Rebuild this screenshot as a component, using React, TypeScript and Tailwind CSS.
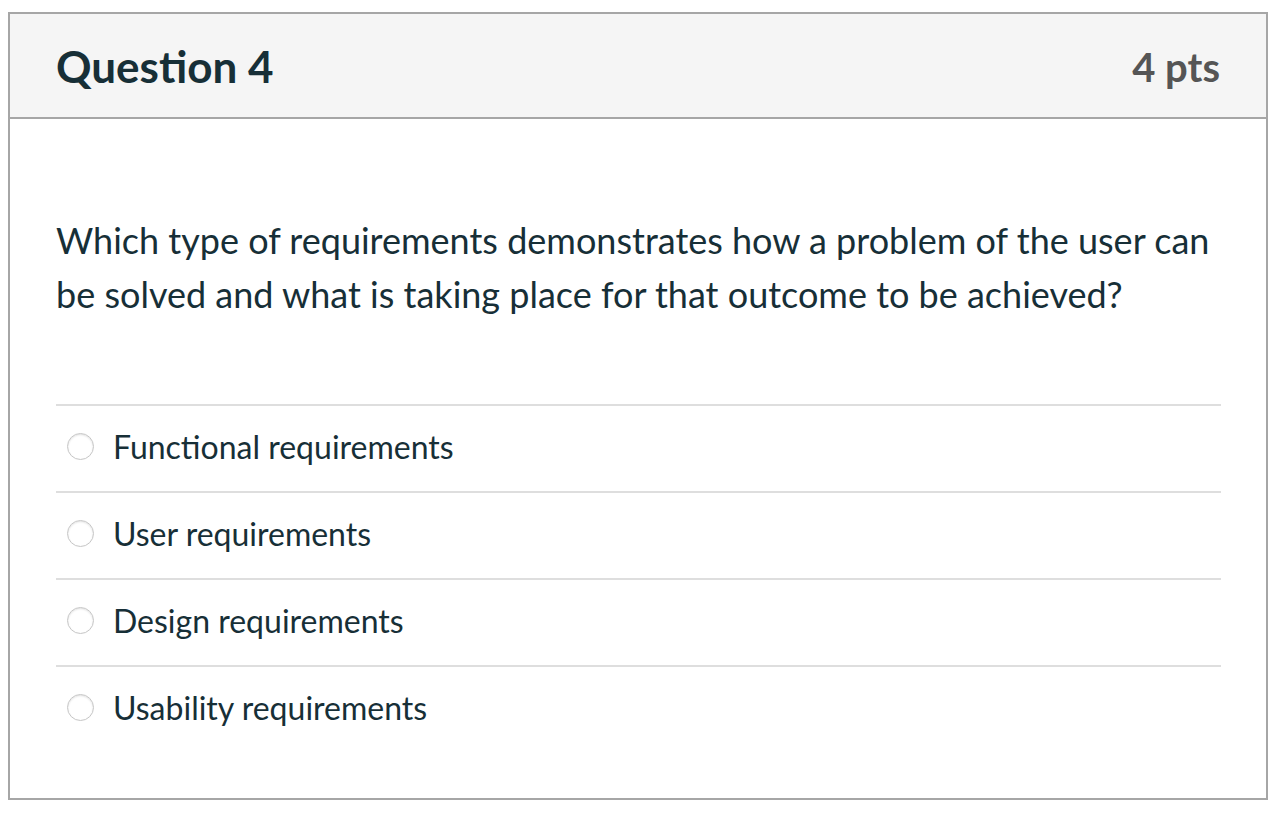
const answers = [
  "Functional requirements",
  "User requirements",
  "Design requirements",
  "Usability requirements",
];

export default function App() {
  return (
    <div className="bg-white min-h-screen pt-[12px] pl-[8px] pr-[10px]" style={{ fontFamily: "Lato, 'Open Sans', sans-serif" }}>
      <div className="w-[1260px] h-[788px] border-2 border-[#a6a6a6] flex flex-col">
        {/* header */}
        <div className="h-[105px] shrink-0 bg-[#f5f5f5] border-b-2 border-[#a6a6a6] flex items-center justify-between pl-[46px] pr-[46px]">
          <h2 className="text-[44px] font-bold text-[#172f37]">Question 4</h2>
          <span className="text-[40px] font-bold text-[#555555] mt-[3px]">4 pts</span>
        </div>

        {/* body */}
        <div className="pl-[46px] pr-[45px] pt-[94px]">
          <p className="text-[36px] leading-[54px] text-[#172f37]">
            Which type of requirements demonstrates how a problem of the user can be solved and what is taking place for that outcome to be achieved?
          </p>
          <div className="mt-[83px]">
            {answers.map((a) => (
              <div key={a} className="border-t-2 border-[#dedede] h-[87px] flex items-center pb-[4px]">
                <span className="ml-[11px] w-[27px] h-[27px] shrink-0 rounded-full border border-[#c6c6c6] bg-white shadow-[inset_0_1px_2px_rgba(0,0,0,0.12)]" />
                <span className="ml-[19px] text-[32px] text-[#172f37]">{a}</span>
              </div>
            ))}
          </div>
        </div>
      </div>
    </div>
  );
}
